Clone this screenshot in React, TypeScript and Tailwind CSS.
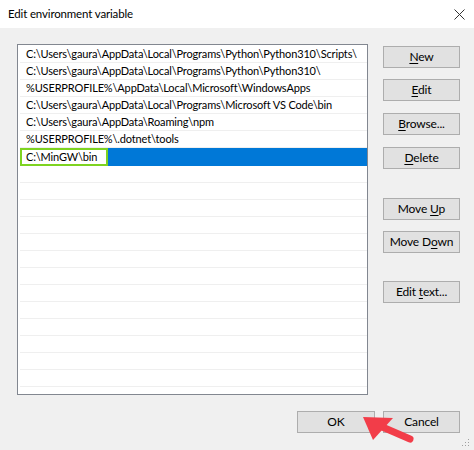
import React from 'react'

const paths = [
  'C:\\Users\\gaura\\AppData\\Local\\Programs\\Python\\Python310\\Scripts\\',
  'C:\\Users\\gaura\\AppData\\Local\\Programs\\Python\\Python310\\',
  '%USERPROFILE%\\AppData\\Local\\Microsoft\\WindowsApps',
  'C:\\Users\\gaura\\AppData\\Local\\Programs\\Microsoft VS Code\\bin',
  'C:\\Users\\gaura\\AppData\\Roaming\\npm',
  '%USERPROFILE%\\.dotnet\\tools',
]

const EMPTY_ROWS = 13

function WinButton({ label, hotkey, className = '' }: { label: string; hotkey?: number; className?: string }) {
  const text = hotkey === undefined ? label : (
    <>
      {label.slice(0, hotkey)}
      <span className="underline underline-offset-2">{label[hotkey]}</span>
      {label.slice(hotkey + 1)}
    </>
  )
  return (
    <button
      type="button"
      className={`w-[77px] h-[22px] border border-[#adadad] bg-[#e1e1e1] text-[12px] text-black leading-none ${className}`}
    >
      {text}
    </button>
  )
}

export default function App() {
  return (
    <div className="relative w-[474px] h-[450px] bg-[#f0f0f0] overflow-hidden text-black font-[Lato,sans-serif] tracking-[-0.15px]">
      {/* Title bar */}
      <div className="h-[28px] bg-white flex items-center justify-between pl-[8px] pr-[9px]">
        <span className="text-[11.5px]">Edit environment variable</span>
        <svg width="11" height="11" viewBox="0 0 11 11" className="text-[#333]">
          <path d="M0.5 0.5L10.5 10.5M10.5 0.5L0.5 10.5" stroke="currentColor" strokeWidth="1" />
        </svg>
      </div>

      <div className="flex pl-[17px] pt-[16px]">
        {/* Path list */}
        <div className="w-[351px] h-[351px] border border-[#828790] bg-white pt-[1px] pl-[2px] overflow-hidden text-[11px]">
          {paths.map(p => (
            <div key={p} className="h-[17px] border-b border-[#efefef] pl-[6px] leading-[16px] whitespace-nowrap">
              {p}
            </div>
          ))}
          <div className="h-[18px] flex">
            <div className="w-[88px] h-[18px] border-2 border-[#7ed321] bg-white pl-[4px] leading-[14px]">
              C:\MinGW\bin
            </div>
            <div className="flex-1 bg-[#0078d7]" />
          </div>
          {Array.from({ length: EMPTY_ROWS }).map((_, i) => (
            <div key={i} className="h-[17px] border-b border-[#efefef]" />
          ))}
        </div>

        {/* Action buttons */}
        <div className="flex flex-col ml-[15px] pt-[2px]">
          <WinButton label="New" hotkey={0} />
          <WinButton label="Edit" hotkey={0} className="mt-[11px]" />
          <WinButton label="Browse..." hotkey={0} className="mt-[12px]" />
          <WinButton label="Delete" hotkey={0} className="mt-[12px]" />
          <WinButton label="Move Up" hotkey={5} className="mt-[29px]" />
          <WinButton label="Move Down" hotkey={6} className="mt-[11px]" />
          <WinButton label="Edit text..." hotkey={5} className="mt-[28px]" />
        </div>
      </div>

      {/* Dialog footer */}
      <div className="flex justify-end gap-[8px] pr-[14px] mt-[16px]">
        <WinButton label="OK" className="w-[78px]" />
        <WinButton label="Cancel" />
      </div>

      {/* Resize grip */}
      <svg width="8" height="8" viewBox="0 0 8 8" className="absolute right-[4px] bottom-[3px]">
        <rect x="6" y="0" width="1" height="1" fill="#a0a0a0" />
        <rect x="3" y="3" width="1" height="1" fill="#a0a0a0" />
        <rect x="6" y="3" width="1" height="1" fill="#a0a0a0" />
        <rect x="0" y="6" width="1" height="1" fill="#a0a0a0" />
        <rect x="3" y="6" width="1" height="1" fill="#a0a0a0" />
        <rect x="6" y="6" width="1" height="1" fill="#a0a0a0" />
      </svg>

      {/* Pointer arrow toward OK */}
      <svg width="60" height="34" viewBox="0 0 60 34" className="absolute left-[358px] top-[412px]">
        <path d="M52 27L22 14" stroke="#f23d49" strokeWidth="7" strokeLinecap="round" />
        <path d="M5 5L35 6L15 28Z" fill="#f23d49" />
      </svg>
    </div>
  )
}
